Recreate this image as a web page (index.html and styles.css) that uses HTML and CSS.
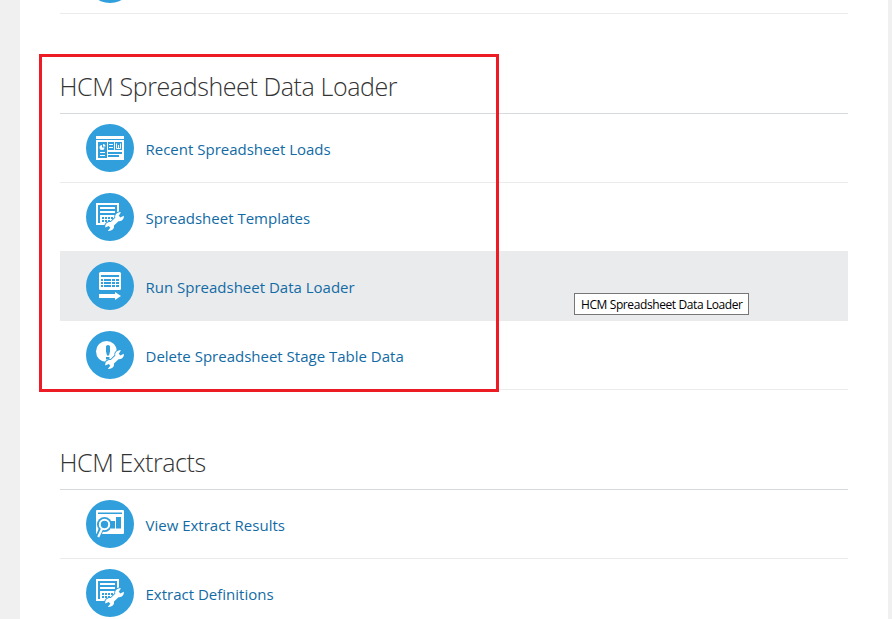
FILE: index.html
```html
<!DOCTYPE html>
<html lang="en">
<head>
    <meta charset="UTF-8">
    <title>HCM Data Exchange</title>
    <link rel="stylesheet" href="styles.css">
</head>
<body>
    <!-- shared icon shapes -->
    <svg class="sprite" width="0" height="0">
        <symbol id="icon-loads" viewBox="0 0 48 48">
            <path d="M10 12h28v3H10zM10 16h28v20H10z" fill="#fff"/>
            <path d="M12 18h9v16h-9zM22 18h6v8h-6zM29 18h7v8h-7zM22 28h14v2H22zM22 31h11v2H22z" fill="#309fdb"/>
            <path d="M16 21v2.500h2.500a2.500 2.500 0 1 1-2.500-2.500zM17 20a2.500 2.500 0 0 1 2.500 2.500h-2.500zM14 28h5v1h-5zM14 31h5v1h-5zM23 20h4v1h-4zM23 23h4v1h-4z" fill="#fff"/>
            <path d="M30.500 19.500v5h4v-5M32.500 21v3" fill="none" stroke="#fff"/>
        </symbol>
        <symbol id="icon-templates" viewBox="0 0 48 48">
            <path d="M32 20V11H11v20h12" fill="none" stroke="#fff" stroke-width="2"/>
            <path d="M14 14h15v2H14zM14 18h15v2H14zM14 22h15v8H14z" fill="#fff"/>
            <path d="M16 24h2v2h-2zM19 24h2v2h-2zM22 24h2v2h-2zM25 24h2v2h-2zM16 27h2v2h-2zM19 27h2v2h-2zM22 27h2v2h-2z" fill="#309fdb"/>
            <path class="wrench" d="M35 19.300l-2.200 3.500 1.600 1.700 3.400-1.700c.5 3-1.800 5.800-5.300 5.400l-4.500 4.400c.5 3.500-2.300 5.800-6.200 5.400l2.500-3.300-1.500-1.700-3.500 1.400c-.4-3.300 2-5.800 5.500-5.300l4.500-4.400c-.6-3.500 2.300-5.900 5.700-5.400z"/>
        </symbol>
        <symbol id="icon-run" viewBox="0 0 48 48">
            <rect x="13" y="10" width="22" height="18" rx="1.500" fill="#fff"/>
            <path d="M15 13h18v2H15zM15 17h2v2h-2zM18 17h7v2h-7zM26 17h3v2h-3zM30 17h3v2h-3zM15 20h2v2h-2zM18 20h7v2h-7zM26 20h3v2h-3zM30 20h3v2h-3zM15 23h2v2h-2zM18 23h7v2h-7zM26 23h3v2h-3zM30 23h3v2h-3z" fill="#309fdb"/>
            <path d="M13 32h16v-2l6 4-6 4v-2H13z" fill="#fff"/>
        </symbol>
        <symbol id="icon-delete" viewBox="0 0 48 48">
            <circle cx="20.500" cy="20.500" r="10.500" fill="#fff"/>
            <path d="M20 15.500q0-1.500 2-1.500t2 1.500v5l-1 4h-2l-1-4zM20 26h3.500v2.500H20z" fill="#309fdb"/>
            <path class="wrench" d="M35 19.300l-2.200 3.500 1.600 1.700 3.400-1.700c.5 3-1.800 5.800-5.300 5.400l-4.500 4.400c.5 3.500-2.300 5.800-6.200 5.400l2.500-3.300-1.500-1.700-3.500 1.400c-.4-3.300 2-5.800 5.500-5.300l4.500-4.400c-.6-3.500 2.300-5.900 5.700-5.400z"/>
        </symbol>
        <symbol id="icon-results" viewBox="0 0 48 48">
            <rect x="10" y="10" width="28" height="24" rx="1" fill="#fff"/>
            <path d="M12 12.500h24V14H12zM25 21h4v7.500h-4zM30 17h5v11.500h-5z" fill="#309fdb"/>
            <path d="M15.500 28.500l-3.500 8.500" stroke="#309fdb" stroke-width="5"/>
            <circle cx="18.500" cy="24.500" r="7.500" fill="#309fdb"/>
            <circle cx="18.500" cy="24.500" r="4.700" fill="none" stroke="#fff" stroke-width="2"/>
            <path d="M16 29l-3.800 8" stroke="#fff" stroke-width="2.200"/>
        </symbol>
    </svg>

    <div class="page">
        <ul class="links">
            <li class="row">
                <svg class="icon"></svg>
            </li>
        </ul>

        <h2 class="title">HCM Spreadsheet Data Loader</h2>
        <ul class="links">
            <li class="row">
                <svg class="icon"><use href="#icon-loads"/></svg>
                <a class="link">Recent Spreadsheet Loads</a>
            </li>
            <li class="row">
                <svg class="icon"><use href="#icon-templates"/></svg>
                <a class="link">Spreadsheet Templates</a>
            </li>
            <li class="row active">
                <svg class="icon"><use href="#icon-run"/></svg>
                <a class="link">Run Spreadsheet Data Loader</a>
            </li>
            <li class="row">
                <svg class="icon"><use href="#icon-delete"/></svg>
                <a class="link">Delete Spreadsheet Stage Table Data</a>
            </li>
        </ul>

        <h2 class="title">HCM Extracts</h2>
        <ul class="links">
            <li class="row">
                <svg class="icon"><use href="#icon-results"/></svg>
                <a class="link">View Extract Results</a>
            </li>
            <li class="row">
                <svg class="icon"><use href="#icon-templates"/></svg>
                <a class="link">Extract Definitions</a>
            </li>
        </ul>
    </div>

    <div class="highlight"></div>
    <div class="tooltip">HCM Spreadsheet Data Loader</div>
</body>
</html>
```
FILE: styles.css
```css
* {
    box-sizing: border-box;
}
body {
    margin: 0;
    height: 619px;
    overflow: hidden;
    background-color: #f0f0f0;
    font-family: "Open Sans", "Noto Sans", sans-serif;
}
.sprite {
    position: absolute;
}
.page {
    width: 868px;
    height: 619px;
    margin-left: 20px;
    padding: 0 40px;
    display: flex;
    flex-direction: column;
    justify-content: flex-start;
    overflow: hidden;
    background-color: #fff;
}
/* the list above is scrolled mostly out of view */
.page > .links:first-child {
    margin-top: -55px;
}
.title {
    flex: none;
    height: 100px;
    margin: 0;
    padding-top: 54px;
    border-bottom: 1px solid #d6dadd;
    color: #333;
    font-size: 25px;
    font-weight: 300;
    line-height: 36px;
    letter-spacing: -0.4px;
    text-indent: -0.5px;
    white-space: nowrap;
}
.links {
    flex: none;
    margin: 0;
    padding: 0;
    list-style: none;
}
.row {
    display: flex;
    align-items: center;
    gap: 11.5px;
    height: 69px;
    padding-left: 26px;
    border-bottom: 1px solid #ebebeb;
}
.row.active {
    background-color: #eaebed;
}
.icon {
    flex: none;
    width: 48px;
    height: 48px;
    border-radius: 50%;
    background-color: #309fdb;
}
.wrench {
    fill: #fff;
    stroke: #309fdb;
    stroke-width: 2px;
    paint-order: stroke;
}
.link {
    padding-top: 2px;
    color: #126ba5;
    font-size: 15px;
    line-height: 22px;
    white-space: nowrap;
}
.highlight {
    position: absolute;
    left: 39px;
    top: 54px;
    width: 460px;
    height: 338px;
    border: 3px solid #ed1c24;
}
.tooltip {
    position: absolute;
    left: 574px;
    top: 293px;
    width: 175px;
    height: 22px;
    padding-left: 6px;
    border: 1px solid #767676;
    background-color: #fff;
    color: #000;
    font-size: 12px;
    letter-spacing: -0.4px;
    line-height: 21px;
    white-space: nowrap;
}
```
